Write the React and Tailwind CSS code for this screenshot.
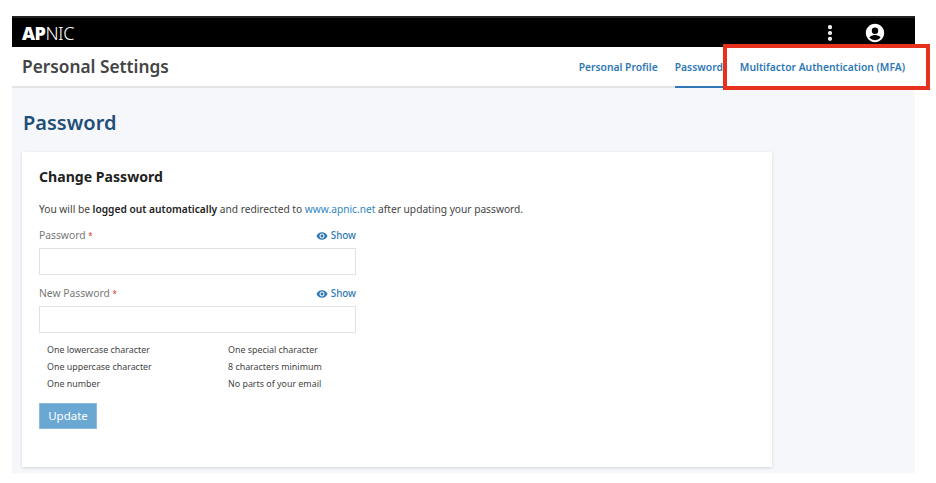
import { EllipsisVertical } from "lucide-react";

function ShowToggle() {
	return (
		<span className="flex items-center gap-[3px] text-[9.8px] font-medium text-[#2f78b5]">
			<svg viewBox="0 0 24 24" className="w-[12px] h-[12px]" fill="currentColor">
				<path d="M12 4.5C7 4.5 2.73 7.61 1 12c1.73 4.39 6 7.5 11 7.5s9.27-3.11 11-7.5c-1.73-4.39-6-7.5-11-7.5zM12 17c-2.76 0-5-2.24-5-5s2.24-5 5-5 5 2.24 5 5-2.24 5-5 5zm0-8c-1.66 0-3 1.34-3 3s1.34 3 3 3 3-1.34 3-3-1.34-3-3-3z" />
			</svg>
			Show
		</span>
	);
}

function Field({ label, mb }) {
	return (
		<div className={mb}>
			<div className="flex items-center justify-between h-[18px] mb-[3px] w-[317px]">
				<label className="text-[10.3px] text-[#777]">
					{label} <span className="text-[8px] text-[#d33]">*</span>
				</label>
				<ShowToggle />
			</div>
			<input
				type="password"
				className="block w-[317px] h-[27px] border border-[#e2e2e2] bg-white"
			/>
		</div>
	);
}

export default function App() {
	const rules = [
		"One lowercase character",
		"One special character",
		"One uppercase character",
		"8 characters minimum",
		"One number",
		"No parts of your email",
	];

	return (
		<div className="relative w-[936px] h-[483px] bg-white font-['Noto_Sans',sans-serif] overflow-hidden pt-[16px] pl-[12px]">
			<div className="w-[903px] h-[457px] bg-[#f6f7fb] flex flex-col">
				<header className="h-[31px] shrink-0 bg-black border-t-2 border-[#222] flex items-center justify-between pl-[10px] pr-[29px]">
					<span className="text-[18px] leading-none text-white tracking-[-0.5px] pt-[1px]">
						<span className="font-black">AP</span>
						<span className="font-light">NIC</span>
					</span>
					<div className="flex items-center gap-[24px]">
						<EllipsisVertical className="w-[20px] h-[20px] text-white" strokeWidth={3} />
						<svg viewBox="0 0 24 24" className="w-[22px] h-[22px]" fill="#fff">
							<path d="M12 2C6.48 2 2 6.48 2 12s4.48 10 10 10 10-4.48 10-10S17.52 2 12 2zm0 4a3.5 3.5 0 1 1 0 7 3.5 3.5 0 0 1 0-7zm0 14a8 8 0 0 1-6-2.7c.03-2 4-3.1 6-3.1s5.97 1.1 6 3.1A8 8 0 0 1 12 20z" />
						</svg>
					</div>
				</header>

				<nav className="h-[41px] shrink-0 bg-white border-b-2 border-[#e4e4e6] flex items-stretch justify-between pl-[10px] pr-[10px]">
					<h2 className="self-center pt-[1px] text-[17.3px] font-semibold text-[#444]">
						Personal Settings
					</h2>
					<div className="flex items-stretch text-[10.3px] font-semibold text-[#2f78b5]">
						<a className="flex items-center pt-[3px] mr-[17px]">Personal Profile</a>
						<a className="flex items-center pt-[3px] mr-[17px] -mb-[2px] border-b-2 border-[#2f78b5]">Password</a>
						<a className="flex items-center pt-[3px]">Multifactor Authentication (MFA)</a>
					</div>
				</nav>

				<main className="pl-[10px] pt-[20px]">
					<h1 className="ml-[1px] text-[20px] leading-[30px] font-semibold text-[#1f4f78] mb-[14px]">
						Password
					</h1>
					<section className="w-[750px] h-[315px] bg-white shadow-[0_1px_3px_rgba(0,0,0,0.14)] pl-[17px] pt-[15px]">
						<h3 className="text-[14.1px] leading-[20px] font-bold text-[#222] mb-[14px]">
							Change Password
						</h3>
						<p className="text-[10.2px] leading-[16px] text-[#444] mb-[10px]">
							You will be <strong className="font-semibold text-[#222]">logged out automatically</strong> and redirected to{" "}
							<a className="text-[#2f86c0]">www.apnic.net</a> after updating your password.
						</p>
						<Field label="Password" mb="mb-[10px]" />
						<Field label="New Password" mb="mb-[8px]" />
						<ul className="grid grid-cols-[181px_1fr] w-[317px] pl-[8px] text-[8.9px] leading-[17px] text-[#444] mb-[10px]">
							{rules.map((r) => (
								<li key={r}>{r}</li>
							))}
						</ul>
						<button className="w-[58px] h-[26px] bg-[#6aa7d3] text-white text-[11.5px] border border-[#8dbce0]">
							Update
						</button>
					</section>
				</main>
			</div>

			<div className="absolute left-[723px] top-[44px] w-[207px] h-[46px] border-[4px] border-[#e8301f]" />
		</div>
	);
}
